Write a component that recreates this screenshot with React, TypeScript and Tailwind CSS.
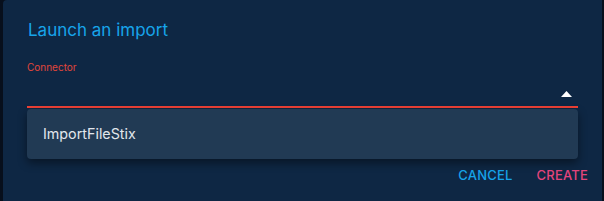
export default function App() {
  return (
    <div
      className="w-[604px] h-[201px] bg-[#070f1c] overflow-hidden flex"
      style={{ fontFamily: 'Inter, "Noto Sans", sans-serif' }}
    >
      <div className="ml-[3px] w-[599px] h-full bg-[#0e2744] rounded-tl-[4px] flex flex-col">
        <h2 className="pl-[25px] pt-[19px] text-[17px] leading-[22px] text-[#17a4ea] font-normal">
          Launch an import
        </h2>

        <div className="mx-[24px] mt-[20px] relative">
          <label className="block text-[10px] leading-[12px] text-[#e2463b]">Connector</label>
          <div className="h-[33px] flex items-end justify-end pr-[6px] pb-[9px]">
            <svg width="11" height="6" viewBox="0 0 11 6">
              <path d="M0 6 L5.5 0 L11 6 Z" fill="#ffffff" />
            </svg>
          </div>
          <div className="h-[2px] bg-[#ef4136]" />

          <div className="absolute left-0 right-0 top-[48px] h-[50px] bg-[#213a54] rounded-[4px] shadow-[0_4px_10px_rgba(0,0,0,0.45)] flex items-center pl-[16px]">
            <span className="text-[14.3px] text-[#e1e6ec]">ImportFileStix</span>
          </div>
        </div>

        <div className="mt-auto mb-[16px] flex justify-end gap-[24px] pr-[14px]">
          <button className="text-[13px] font-medium tracking-[0.2px] text-[#17a4ea]">CANCEL</button>
          <button className="text-[13px] font-medium tracking-[0.2px] text-[#e4457c]">CREATE</button>
        </div>
      </div>
    </div>
  )
}
